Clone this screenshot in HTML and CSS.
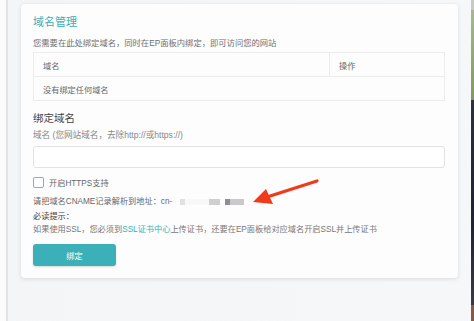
FILE: index.html
```html
<!DOCTYPE html>
<html lang="zh-CN">
<head>
<meta charset="utf-8">
<title>域名管理</title>
<link rel="stylesheet" href="styles.css">
</head>
<body>
<div class="screen">
  <div class="rail"></div>
  <main class="card">
    <h1 class="title">域名管理</h1>
    <p class="desc">您需要在此处绑定域名，同时在EP面板内绑定，即可访问您的网站</p>
    <table class="domains">
      <thead>
        <tr><th class="col-name">域名</th><th class="col-op">操作</th></tr>
      </thead>
      <tbody>
        <tr><td colspan="2">没有绑定任何域名</td></tr>
      </tbody>
    </table>
    <h2 class="subtitle">绑定域名</h2>
    <label class="field-label" for="domain">域名 (您网站域名，去除http://或https://)</label>
    <input class="field" id="domain" type="text">
    <label class="check-row">
      <span class="checkbox"></span>
      <span>开启HTTPS支持</span>
    </label>
    <p class="cname">请把域名CNAME记录解析到地址：cn-<span class="blur"><i class="b1"></i><i class="b2"></i><i class="b3"></i><i class="b4"></i><i class="b5"></i></span></p>
    <p class="notice-title">必读提示：</p>
    <p class="notice">如果使用SSL，您必须到<a class="link" href="#">SSL证书中心</a>上传证书，还要在EP面板给对应域名开启SSL并上传证书</p>
    <button class="btn" type="button">绑定</button>
    <svg class="arrow" width="80" height="40" viewBox="0 0 80 40">
      <path d="M70 5 L20 21" stroke="#f03a1c" stroke-width="3.2" stroke-linecap="round" fill="none"/>
      <path d="M6 26 L19 13 L26 28 Z" fill="#f03a1c"/>
    </svg>
  </main>
  <div class="strip">
    <span class="s0"></span><span class="s1"></span><span class="s2"></span><span class="s3"></span>
  </div>
</div>
</body>
</html>
```

FILE: styles.css
```css
* { box-sizing: border-box; }
html, body { margin: 0; padding: 0; }
body {
  width: 474px;
  height: 321px;
  overflow: hidden;
  background: #f6f7f9;
  font-family: "Liberation Sans", "Noto Sans CJK SC", sans-serif;
  color: #666;
}
.screen {
  display: flex;
  height: 321px;
  padding-left: 6px;
  background: linear-gradient(90deg, #fbfbfc 0, #fbfbfc 6px, #f4f5f7 8px, #f6f7f9 100%);
}
.rail {
  width: 2px;
  background: #e2e3e6;
  margin-right: 13px;
}
.card {
  position: relative;
  width: 437px;
  height: 274px;
  margin-top: 4px;
  padding: 11px 12px 0 12px;
  background: #fdfdfe;
  border-radius: 4px;
  box-shadow: 0 1px 4px rgba(0,0,0,0.12);
  display: flex;
  flex-direction: column;
}
.title {
  margin: 0;
  font-size: 11px;
  line-height: 14px;
  font-weight: normal;
  color: #36b1b8;
}
.desc {
  margin: 8px 0 0 0;
  font-size: 8.3px;
  line-height: 12px;
  color: #6f6f6f;
}
.domains {
  margin-top: 3px;
  width: 412px;
  border-collapse: collapse;
  font-size: 8.2px;
  color: #666;
}
.domains th, .domains td {
  border: 1px solid #ececec;
  height: 24px;
  padding: 0 0 0 9px;
  text-align: left;
  font-weight: normal;
}
.col-name { width: 296px; }
.subtitle {
  margin: 10px 0 0 0;
  font-size: 10.5px;
  line-height: 14px;
  font-weight: normal;
  color: #444;
}
.field-label {
  margin: 4px 0 0 0;
  font-size: 8.6px;
  line-height: 12px;
  color: #888;
}
.field {
  margin-top: 5px;
  width: 412px;
  height: 22px;
  border: 1px solid #e2e2e2;
  border-radius: 3px;
  background: #fff;
}
.check-row {
  margin-top: 8px;
  display: flex;
  align-items: center;
  gap: 5px;
  height: 12px;
  font-size: 8.2px;
  color: #666;
}
.checkbox {
  width: 11px;
  height: 11px;
  border: 1px solid #63c0c6;
  border-radius: 2px;
  background: #fff;
}
.cname {
  margin: 8px 0 0 0;
  font-size: 8.2px;
  line-height: 12px;
  color: #666;
  display: flex;
  align-items: center;
}
.blur {
  display: flex;
  align-items: center;
  height: 6px;
  margin-left: 8px;
}
.blur i { display: block; height: 6px; }
.b1 { width: 5px; background: #e1e1e3; }
.b2 { width: 24px; background: #f8f8f9; }
.b3 { width: 11px; background: #cfcfd2; }
.b4 { width: 5px; margin-left: 5px; background: #8f8f93; }
.b5 { width: 14px; background: #c9c9cc; }
.notice-title {
  margin: 3px 0 0 0;
  font-size: 8.2px;
  line-height: 12px;
  color: #444;
}
.notice {
  margin: 1px 0 0 0;
  font-size: 8.2px;
  line-height: 12px;
  color: #777;
}
.link { color: #36b1b8; text-decoration: none; }
.btn {
  margin-top: 8px;
  width: 83px;
  height: 22px;
  border: 0;
  border-radius: 3px;
  background: #3cb0b8;
  color: #fff;
  font-family: inherit;
  font-size: 8.2px;
  box-shadow: 0 1px 2px rgba(0,0,0,0.15);
}
.arrow {
  position: absolute;
  left: 226px;
  top: 172px;
}
.strip {
  margin-left: 13px;
  width: 3px;
  display: flex;
  flex-direction: column;
}
.strip span { display: block; }
.s0 { height: 10px; background: #c8cbc2; }
.s1 { height: 90px; background: linear-gradient(#a7b98a, #7f9a5e); }
.s2 { height: 205px; background: linear-gradient(#2a3040, #1d2234 60%, #3a3a46); }
.s3 { flex: 1; background: #8a5a40; }
```
